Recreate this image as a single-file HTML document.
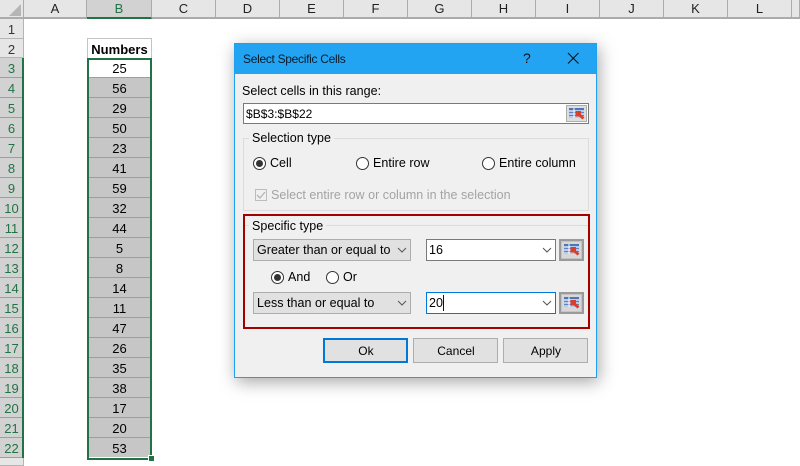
<!DOCTYPE html>
<html>
<head>
<meta charset="utf-8">
<style>
html,body{margin:0;padding:0;width:800px;height:466px;overflow:hidden;background:#fff;}
body{position:relative;font-family:"Liberation Sans",sans-serif;font-size:12.5px;letter-spacing:.03px;color:#000;}
.a{position:absolute;box-sizing:border-box;}
.t{position:absolute;white-space:nowrap;line-height:16px;height:16px;}
.ch{position:absolute;top:0;height:19px;background:#e6e6e6;border-right:1px solid #ababab;border-bottom:2px solid #ababab;box-sizing:border-box;text-align:center;line-height:17px;color:#222;font-size:13px;}
.rh{position:absolute;left:0;width:23px;height:20px;background:#e6e6e6;border-bottom:1px solid #b5b5b5;box-sizing:border-box;text-align:center;line-height:21px;font-size:13px;color:#333;}
.rh.s{background:#d2d2d2;color:#217346;border-bottom-color:#9e9e9e;}
.c{position:absolute;left:89px;width:61px;height:20px;background:#c6c6c6;border-bottom:1px solid #9e9e9e;box-sizing:border-box;text-align:center;line-height:21px;font-size:13px;color:#000;}
.radio{position:absolute;width:13px;height:13px;border:1px solid #333;border-radius:50%;background:#fff;box-sizing:border-box;}
.radio.on:after{content:"";position:absolute;left:2px;top:2px;width:7px;height:7px;border-radius:50%;background:#333;}
.sel{position:absolute;box-sizing:border-box;background:#e1e1e1;border:1px solid #adadad;height:22px;}
.inp{position:absolute;box-sizing:border-box;background:#fff;border:1px solid #7a7a7a;height:22px;}
.btn{position:absolute;box-sizing:border-box;background:#e1e1e1;border:1px solid #adadad;height:25px;width:85px;text-align:center;line-height:24px;font-size:12px;color:#000;padding-left:1px;}
.ib{position:absolute;box-sizing:border-box;background:#e1e1e1;border:2px solid #9a9a9a;}
</style>
</head>
<body>
<!-- column headers -->
<div class="a" style="left:0;top:0;width:24px;height:19px;background:#e6e6e6;border-right:1px solid #ababab;border-bottom:2px solid #ababab;"></div>
<svg class="a" style="left:8px;top:3px;" width="14" height="14"><path d="M13 1V13H1Z" fill="#b5b5b5"/></svg>
<div class="ch" style="left:24px;width:63px;">A</div>
<div class="ch" style="left:87px;width:65px;background:#d2d2d2;color:#217346;border-bottom:2px solid #217346;">B</div>
<div class="ch" style="left:152px;width:64px;">C</div>
<div class="ch" style="left:216px;width:64px;">D</div>
<div class="ch" style="left:280px;width:64px;">E</div>
<div class="ch" style="left:344px;width:64px;">F</div>
<div class="ch" style="left:408px;width:64px;">G</div>
<div class="ch" style="left:472px;width:64px;">H</div>
<div class="ch" style="left:536px;width:64px;">I</div>
<div class="ch" style="left:600px;width:64px;">J</div>
<div class="ch" style="left:664px;width:64px;">K</div>
<div class="ch" style="left:728px;width:64px;">L</div>
<div class="ch" style="left:792px;width:8px;"></div>

<!-- row headers -->
<div class="a" style="left:23px;top:19px;width:1px;height:447px;background:#b5b5b5;"></div>
<div class="rh" style="top:19px;">1</div>
<div class="rh" style="top:39px;height:19px;">2</div>
<div class="rh s" style="top:58px;">3</div>
<div class="rh s" style="top:78px;">4</div>
<div class="rh s" style="top:98px;">5</div>
<div class="rh s" style="top:118px;">6</div>
<div class="rh s" style="top:138px;">7</div>
<div class="rh s" style="top:158px;">8</div>
<div class="rh s" style="top:178px;">9</div>
<div class="rh s" style="top:198px;">10</div>
<div class="rh s" style="top:218px;">11</div>
<div class="rh s" style="top:238px;">12</div>
<div class="rh s" style="top:258px;">13</div>
<div class="rh s" style="top:278px;">14</div>
<div class="rh s" style="top:298px;">15</div>
<div class="rh s" style="top:318px;">16</div>
<div class="rh s" style="top:338px;">17</div>
<div class="rh s" style="top:358px;">18</div>
<div class="rh s" style="top:378px;">19</div>
<div class="rh s" style="top:398px;">20</div>
<div class="rh s" style="top:418px;">21</div>
<div class="rh s" style="top:438px;">22</div>
<div class="rh" style="top:458px;height:8px;"></div>
<div class="a" style="left:22px;top:58px;width:2px;height:400px;background:#217346;"></div>

<!-- header cell -->
<div class="a" style="left:87px;top:38px;width:65px;height:21px;border:1px solid #c4c4c4;background:#fff;text-align:center;line-height:21px;font-weight:bold;font-size:13px;color:#000;">Numbers</div>

<!-- data -->
<div class="c" style="top:58px;background:#fff;">25</div>
<div class="c" style="top:78px;">56</div>
<div class="c" style="top:98px;">29</div>
<div class="c" style="top:118px;">50</div>
<div class="c" style="top:138px;">23</div>
<div class="c" style="top:158px;">41</div>
<div class="c" style="top:178px;">59</div>
<div class="c" style="top:198px;">32</div>
<div class="c" style="top:218px;">44</div>
<div class="c" style="top:238px;">5</div>
<div class="c" style="top:258px;">8</div>
<div class="c" style="top:278px;">14</div>
<div class="c" style="top:298px;">11</div>
<div class="c" style="top:318px;">47</div>
<div class="c" style="top:338px;">26</div>
<div class="c" style="top:358px;">35</div>
<div class="c" style="top:378px;">38</div>
<div class="c" style="top:398px;">17</div>
<div class="c" style="top:418px;">20</div>
<div class="c" style="top:438px;">53</div>
<div class="a" style="left:87px;top:58px;width:65px;height:402px;border:2px solid #217346;"></div>
<div class="a" style="left:89px;top:457px;width:61px;height:1px;background:#fff;"></div>
<div class="a" style="left:148px;top:455px;width:7px;height:7px;background:#217346;border:1px solid #fff;"></div>

<!-- dialog -->
<div class="a" style="left:234px;top:43px;width:363px;height:335px;background:#f0f0f0;border:1px solid #1f9ff0;box-shadow:2px 4px 16px rgba(0,0,0,.35);"></div>
<div class="a" style="left:235px;top:44px;width:361px;height:30px;background:#23a4f3;"></div>
<div class="t" style="left:243px;top:51px;color:#0a1a28;font-size:12px;letter-spacing:-.3px;">Select Specific Cells</div>
<div class="t" style="left:523px;top:50px;font-size:14px;color:#111;">?</div>
<svg class="a" style="left:566px;top:51px;" width="14" height="14"><path d="M2 2L12.500 12.500M12.500 2L2 12.500" stroke="#111" stroke-width="1.100" fill="none"/></svg>

<div class="t" style="left:242px;top:83px;">Select cells in this range:</div>
<div class="inp" style="left:243px;top:103px;width:346px;height:21px;"></div>
<div class="t" style="left:246px;top:106px;font-size:12px;">$B$3:$B$22</div>
<div class="ib" style="left:566px;top:105px;width:21px;height:17px;border-width:1px;border-color:#adadad;background:#dedede;"></div>
<svg class="a" style="left:569px;top:107px;" width="16" height="13"><rect x="0" y="1" width="15" height="10" fill="#b9cbe8"/><rect x="0" y="1" width="15" height="2" fill="#4f74b8"/><path d="M0 5.500H15M0 8.500H15" stroke="#5f82c4"/><path d="M5 1V11" stroke="#ffffff"/><path d="M6.500 4H12V7.500L15.500 10.500L13.500 12.500L10 9.500H6.500Z" fill="#d8402a"/></svg>

<!-- selection type group -->
<div class="a" style="left:243px;top:138px;width:346px;height:73px;border:1px solid #dcdcdc;"></div>
<div class="t" style="left:249px;top:130px;background:#f0f0f0;padding:0 3px;">Selection type</div>
<div class="radio on" style="left:253px;top:157px;"></div>
<div class="t" style="left:270px;top:155px;">Cell</div>
<div class="radio" style="left:356px;top:157px;"></div>
<div class="t" style="left:373px;top:155px;">Entire row</div>
<div class="radio" style="left:482px;top:157px;"></div>
<div class="t" style="left:499px;top:155px;">Entire column</div>
<div class="a" style="left:255px;top:189px;width:12px;height:12px;border:1px solid #bcbcbc;background:#f0f0f0;"></div>
<svg class="a" style="left:255px;top:189px;" width="12" height="12"><path d="M2 6L5 9L10 3" stroke="#b4b4b4" stroke-width="1.300" fill="none"/></svg>
<div class="t" style="left:271px;top:187px;color:#a3a3a3;">Select entire row or column in the selection</div>

<!-- specific type -->
<div class="a" style="left:243px;top:214px;width:347px;height:115px;border:2px solid #a40000;"></div>
<div class="a" style="left:245px;top:225px;width:343px;height:1px;background:#dcdcdc;"></div>
<div class="t" style="left:249px;top:218px;background:#f0f0f0;padding:0 3px;">Specific type</div>

<div class="sel" style="left:253px;top:239px;width:158px;"></div>
<div class="t" style="left:257px;top:242px;">Greater than or equal to</div>
<svg class="a" style="left:397px;top:247px;" width="10" height="7"><path d="M1 1L5 5L9 1" stroke="#555" fill="none"/></svg>
<div class="inp" style="left:426px;top:239px;width:130px;"></div>
<div class="t" style="left:429px;top:242px;">16</div>
<svg class="a" style="left:542px;top:247px;" width="10" height="7"><path d="M1 1L5 5L9 1" stroke="#555" fill="none"/></svg>
<div class="ib" style="left:559px;top:239px;width:25px;height:22px;"></div>
<div class="a" style="left:561px;top:241px;width:21px;height:18px;background:#d8d8d8;border:1px solid #c4c4c4;"></div>
<svg class="a" style="left:564px;top:243px;" width="16" height="13"><rect x="0" y="1" width="15" height="10" fill="#b9cbe8"/><rect x="0" y="1" width="15" height="2" fill="#4f74b8"/><path d="M0 5.500H15M0 8.500H15" stroke="#5f82c4"/><path d="M5 1V11" stroke="#ffffff"/><path d="M6.500 4H12V7.500L15.500 10.500L13.500 12.500L10 9.500H6.500Z" fill="#d8402a"/></svg>

<div class="radio on" style="left:271px;top:271px;"></div>
<div class="t" style="left:288px;top:269px;">And</div>
<div class="radio" style="left:326px;top:271px;"></div>
<div class="t" style="left:343px;top:269px;">Or</div>

<div class="sel" style="left:253px;top:292px;width:158px;"></div>
<div class="t" style="left:257px;top:295px;">Less than or equal to</div>
<svg class="a" style="left:397px;top:300px;" width="10" height="7"><path d="M1 1L5 5L9 1" stroke="#555" fill="none"/></svg>
<div class="inp" style="left:426px;top:292px;width:130px;border-color:#0078d7;"></div>
<div class="t" style="left:429px;top:295px;">20</div>
<div class="a" style="left:443px;top:295px;width:1px;height:16px;background:#111;"></div>
<svg class="a" style="left:542px;top:300px;" width="10" height="7"><path d="M1 1L5 5L9 1" stroke="#555" fill="none"/></svg>
<div class="ib" style="left:559px;top:292px;width:25px;height:22px;"></div>
<div class="a" style="left:561px;top:294px;width:21px;height:18px;background:#d8d8d8;border:1px solid #c4c4c4;"></div>
<svg class="a" style="left:564px;top:296px;" width="16" height="13"><rect x="0" y="1" width="15" height="10" fill="#b9cbe8"/><rect x="0" y="1" width="15" height="2" fill="#4f74b8"/><path d="M0 5.500H15M0 8.500H15" stroke="#5f82c4"/><path d="M5 1V11" stroke="#ffffff"/><path d="M6.500 4H12V7.500L15.500 10.500L13.500 12.500L10 9.500H6.500Z" fill="#d8402a"/></svg>

<!-- buttons -->
<div class="btn" style="left:323px;top:338px;border:2px solid #0078d7;line-height:22px;">Ok</div>
<div class="btn" style="left:413px;top:338px;">Cancel</div>
<div class="btn" style="left:503px;top:338px;">Apply</div>
</body>
</html>
